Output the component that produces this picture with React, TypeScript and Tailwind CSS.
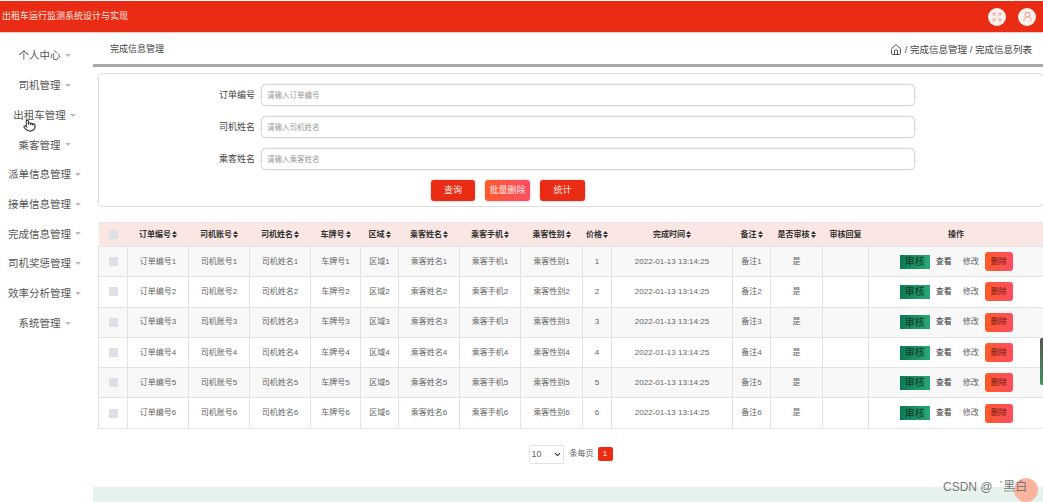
import React from "react";
import { Expand, House, Pointer, UserRound, ChevronDown } from "lucide-react";

const menus = [
  "个人中心",
  "司机管理",
  "出租车管理",
  "乘客管理",
  "派单信息管理",
  "接单信息管理",
  "完成信息管理",
  "司机奖惩管理",
  "效率分析管理",
  "系统管理",
];

const columns = [
  { title: "订单编号", width: 61, cell: "订单编号" },
  { title: "司机账号", width: 61, cell: "司机账号" },
  { title: "司机姓名", width: 61, cell: "司机姓名" },
  { title: "车牌号", width: 50, cell: "车牌号" },
  { title: "区域", width: 38, cell: "区域" },
  { title: "乘客姓名", width: 61, cell: "乘客姓名" },
  { title: "乘客手机", width: 61, cell: "乘客手机" },
  { title: "乘客性别", width: 62, cell: "乘客性别" },
  { title: "价格", width: 29, cell: "" },
  { title: "完成时间", width: 121, cell: "2022-01-13 13:14:25" },
  { title: "备注", width: 38, cell: "备注" },
];

const rows = [1, 2, 3, 4, 5, 6];

const SortIcon = () => (
  <svg width="5" height="7" viewBox="0 0 5 7" className="inline-block ml-px">
    <path d="M2.5 0L5 3H0z M2.5 7L0 4h5z" fill="#333" />
  </svg>
);

const Arrow = () => (
  <span className="inline-block ml-[4px] mb-px w-0 h-0 border-x-[3px] border-x-transparent border-t-[3px] border-t-[#bbb]"></span>
);

const SearchField = ({ label, holder }: { label: string; holder: string }) => (
  <div className="flex items-center h-[22px]">
    <label className="w-[156px] pt-px text-right text-[9px] text-[#444]">{label}</label>
    <input
      placeholder={holder}
      className="ml-[6px] w-[654px] h-[22px] px-[5px] text-[7.5px] bg-white border border-[#d8d8d8] rounded-[5px] shadow-[0_0_2px_#ddd] placeholder:text-[#999]"
    />
  </div>
);

const App = () => {
  return (
    <div className="relative w-[1043px] h-[502px] overflow-hidden bg-white font-['Liberation_Sans','Noto_Sans_CJK_SC',sans-serif] text-[#666]">
      {/* top bar */}
      <header className="flex items-center justify-between h-[33px] bg-[#e92c13] border-t border-white border-b border-b-[#f4c9c0] pl-[2px] pr-[7px]">
        <span className="text-[9px] text-[#ffe9e4]">出租车运行监测系统设计与实现</span>
        <div className="flex items-center gap-[12px]">
          <span className="flex items-center justify-center w-[18px] h-[18px] rounded-full bg-[#fdf1ee]">
            <Expand size={10} strokeWidth={2.5} color="#f3a99c" />
          </span>
          <span className="flex items-center justify-center w-[18px] h-[18px] rounded-full bg-[#fdf1ee]">
            <UserRound size={11} strokeWidth={2.5} color="#f3a99c" />
          </span>
        </div>
      </header>

      <div className="flex">
        {/* side menu */}
        <aside className="w-[93px] shrink-0 flex flex-col items-center pt-[8.5px] pr-[4px]">
          {menus.map((name) => (
            <div key={name} className="h-[29.7px] flex items-center justify-center text-[10.5px] text-[#555] whitespace-nowrap">
              {name}
              <Arrow />
            </div>
          ))}
        </aside>

        <main className="flex-1 min-w-0">
          {/* breadcrumb */}
          <div className="flex items-center justify-between h-[34px] pt-[3px] border-b-[3px] border-[#a9a9a9] pl-[17px] pr-[11px] text-[9px] text-[#444]">
            <span>完成信息管理</span>
            <span className="flex items-center gap-[3px] text-[9.5px]">
              <House size={12} color="#555" />
              / 完成信息管理 / 完成信息列表
            </span>
          </div>

          <div className="pl-[5px]">
            {/* search card */}
            <section className="mt-[6px] h-[134px] border border-[#dcdcdc] rounded-[5px] pt-[10px] w-[946px]">
              <div className="w-[818px] flex flex-col gap-[10px]">
                <SearchField label="订单编号" holder="请输入订单编号" />
                <SearchField label="司机姓名" holder="请输入司机姓名" />
                <SearchField label="乘客姓名" holder="请输入乘客姓名" />
                <div className="flex justify-center gap-[10px]">
                  <button className="w-[44px] h-[21px] rounded-[3px] bg-[#e92c13] text-[9px] text-[#ffe9e4] shadow-[0_0_3px_#bbb]">查询</button>
                  <button className="w-[45px] h-[21px] rounded-[3px] bg-gradient-to-r from-[#ff5a24] to-[#ff4d63] text-[9px] text-[#ffe9e4] shadow-[0_0_3px_#ccc]">批量删除</button>
                  <button className="w-[45px] h-[21px] rounded-[3px] bg-[#e92c13] text-[9px] text-[#ffe9e4] shadow-[0_0_3px_#bbb]">统计</button>
                </div>
              </div>
            </section>

            {/* data table */}
            <table className="mt-[15px] w-[945px] table-fixed border-collapse text-[8px] text-center">
              <colgroup>
                <col className="w-[29px]" />
                {columns.map((c) => (
                  <col key={c.title} style={{ width: c.width }} />
                ))}
                <col className="w-[52px]" />
                <col className="w-[46px]" />
                <col className="w-[175px]" />
              </colgroup>
              <thead>
                <tr className="h-[24px] bg-[#fae6e3] text-[8px] font-bold text-[#333]">
                  <th className="border-y border-[#e6e6e6]">
                    <span className="block mx-auto w-[9px] h-[9px] bg-[#dde0e6]"></span>
                  </th>
                  {columns.map((c) => (
                    <th key={c.title} className="border-y border-[#e6e6e6]">
                      {c.title}
                      <SortIcon />
                    </th>
                  ))}
                  <th className="border-y border-[#e6e6e6]">
                    是否审核
                    <SortIcon />
                  </th>
                  <th className="border-y border-[#e6e6e6]">审核回复</th>
                  <th className="border-y border-[#e6e6e6]">操作</th>
                </tr>
              </thead>
              <tbody>
                {rows.map((n) => (
                  <tr key={n} className={n % 2 === 1 ? "h-[30.3px] bg-[#f8f8f8]" : "h-[30.3px] bg-white"}>
                    <td className="border border-[#e3e3e3]">
                      <span className="block mx-auto w-[9px] h-[9px] bg-[#dde0e6]"></span>
                    </td>
                    {columns.map((c) => (
                      <td key={c.title} className="border border-[#e3e3e3] whitespace-nowrap">
                        {c.title === "完成时间" ? c.cell : `${c.cell}${n}`}
                      </td>
                    ))}
                    <td className="border border-[#e3e3e3]">是</td>
                    <td className="border border-[#e3e3e3]"></td>
                    <td className="border border-[#e3e3e3] border-r-0">
                      <div className="flex items-center justify-center">
                        <span className="flex items-center justify-center w-[30px] h-[14px] bg-gradient-to-r from-[#0b7a53] to-[#2aa878] text-[10px] text-[#0b3b2a]">审核</span>
                        <span className="ml-[6px] text-[#333]">查看</span>
                        <span className="ml-[11px] text-[#666]">修改</span>
                        <span className="ml-[6px] flex items-center justify-center w-[28px] h-[19px] rounded-[3px] bg-gradient-to-r from-[#ff5a24] to-[#ff4d5e] text-[#6b1a10]">删除</span>
                      </div>
                    </td>
                  </tr>
                ))}
              </tbody>
            </table>

            {/* pager */}
            <div className="flex items-center justify-center w-[945px] mt-[16px] h-[19px]">
              <div className="relative flex items-center shrink-0 w-[35px] h-[19px] pl-[2px] border border-[#e3e3e3] rounded-[2px] text-[9px] text-[#666]">
                10
                <ChevronDown size={9} strokeWidth={3} color="#333" className="absolute right-[1px] top-[4px]" />
              </div>
              <span className="ml-[6px] shrink-0 text-[8px] text-[#666]">条每页</span>
              <span className="ml-[4px] shrink-0 flex items-center justify-center w-[15px] h-[14px] rounded-[2px] bg-[#e92c13] text-[8px] text-white">1</span>
            </div>
          </div>

          {/* footer strip */}
          <div className="mt-[23px] h-[20px] bg-[#e6f2ee]"></div>
        </main>
      </div>

      {/* things lying over the page */}
      <Pointer size={13} color="#333" fill="#fff" className="absolute left-[23px] top-[119px]" />
      <div className="absolute right-0 top-[338px] w-[3px] h-[47px] rounded-l-[2px] bg-gradient-to-b from-[#555] to-[#3f8f5f]"></div>
      <div className="absolute left-[1014px] top-[478px] w-[24px] h-[24px] rounded-full bg-[#fcb49f]"></div>
      <span className="absolute left-[943px] top-[478px] text-[12px] text-[#777] whitespace-pre">CSDN @  `黑白</span>
    </div>
  );
};

export default App;
